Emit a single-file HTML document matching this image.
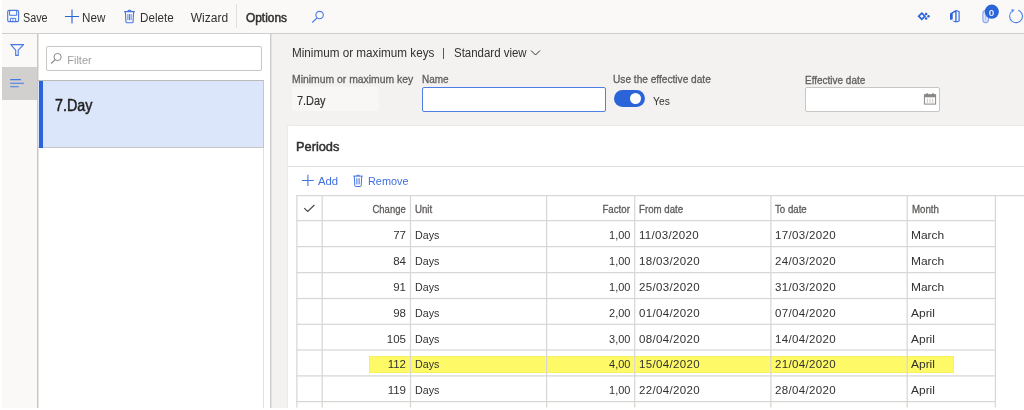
<!DOCTYPE html>
<html><head><meta charset="utf-8">
<style>
*{box-sizing:border-box;margin:0;padding:0}
html,body{width:1024px;height:410px;overflow:hidden;background:#fff;font-family:"Liberation Sans",sans-serif;color:#323130}
.a{position:absolute}
.t{position:absolute;white-space:nowrap;line-height:1;transform-origin:left top}
</style></head><body>
<div style="position:absolute;left:0;top:0;width:1024px;height:410px;filter:blur(0.35px)">
<div class="a" style="left:2px;top:-6px;width:1030px;height:39px;background:#faf9f8"></div>
<div class="a" style="left:2px;top:33px;width:1030px;height:1px;background:#d0cecc"></div>
<svg class="a" style="left:7px;top:9px" width="14" height="14" viewBox="0 0 14 14"><rect x="0.7" y="1.4" width="10.9" height="11.2" rx="1.3" fill="none" stroke="#4677e4" stroke-width="1.1"/><path d="M2.6 1.4V6.3H9.7V1.4" fill="none" stroke="#4677e4" stroke-width="1"/><path d="M3.4 12.6V9.3H8.7V12.6" fill="none" stroke="#4677e4" stroke-width="1"/><path d="M5.2 11H6.6" stroke="#4677e4" stroke-width="1"/></svg>
<div class="t" style="left:23.24px;top:11.88px;font-size:12px;color:#323130;font-weight:normal;transform:scaleX(0.9);">Save</div>
<svg class="a" style="left:64px;top:9px" width="16" height="15" viewBox="0 0 16 15"><path d="M1 7.5H15M8 0.5V14.5" stroke="#2b63d9" stroke-width="1.1" fill="none"/></svg>
<div class="t" style="left:82.19px;top:11.88px;font-size:12px;color:#323130;font-weight:normal;transform:scaleX(0.97);">New</div>
<svg class="a" style="left:123px;top:8px" width="13" height="16" viewBox="0 0 13 16"><path d="M1.1 3.6H11.9M4.4 3.6Q6.5 0.6 8.6 3.6M2.4 3.6L2.9 13.6Q3 14.7 4.1 14.7H8.9Q10 14.7 10.1 13.6L10.6 3.6" stroke="#4677e4" stroke-width="1.1" fill="none"/><path d="M4.9 6V12.2M6.5 6V12.2M8.1 6V12.2" stroke="#4677e4" stroke-width="0.9" fill="none"/></svg>
<div class="t" style="left:140.19px;top:11.88px;font-size:12px;color:#323130;font-weight:normal;transform:scaleX(0.97);">Delete</div>
<div class="t" style="left:190.76px;top:11.88px;font-size:12px;color:#323130;font-weight:normal;">Wizard</div>
<div class="a" style="left:236px;top:4px;width:1px;height:24px;background:#e1dfdd"></div>
<div class="t" style="left:246.17px;top:11.88px;font-size:12px;color:#323130;font-weight:normal;transform:scaleX(0.99);-webkit-text-stroke:0.5px #323130;">Options</div>
<svg class="a" style="left:311px;top:9.5px" width="14" height="14" viewBox="0 0 14 14"><circle cx="8.6" cy="5.1" r="3.7" fill="none" stroke="#4a7ae6" stroke-width="1.1"/><path d="M6 7.8L1.3 12.5" stroke="#4a7ae6" stroke-width="1.2"/></svg>
<svg class="a" style="left:916px;top:10px" width="16" height="12" viewBox="0 0 16 12"><path d="M5.8 3.1L8.9 6.2L5.8 9.3L2.7 6.2Z" fill="none" stroke="#2b63d9" stroke-width="1.7"/><circle cx="10.1" cy="3.9" r="1.25" fill="#2b63d9"/><circle cx="10.1" cy="8.5" r="1.25" fill="#2b63d9"/><circle cx="12.5" cy="6.2" r="1.25" fill="#2b63d9"/></svg>
<svg class="a" style="left:948px;top:9px" width="14" height="15" viewBox="0 0 14 15"><path d="M2 4.4L7.3 1.2H8.6V13.3H7.3L3.8 11.7L7.3 12V3L4.7 4.5V10.3L2 11Z" fill="#2b63d9"/><path d="M8.4 1.6L11.1 2.6V11.9L8.4 12.9" fill="none" stroke="#2b63d9" stroke-width="1.1"/></svg>
<svg class="a" style="left:980px;top:3px" width="22" height="22" viewBox="0 0 22 22"><rect x="2.9" y="7.4" width="5.6" height="12.2" rx="2.8" fill="#dce5fa" stroke="#86a3ea" stroke-width="1.1"/><path d="M5.7 9.5V17.5" stroke="#a9bef1" stroke-width="1"/><circle cx="11.8" cy="8.7" r="7.1" fill="#2b63d9"/></svg>
<div class="t" style="left:989.37px;top:7.50px;font-size:9.4px;color:#fff;font-weight:normal;transform:scaleX(0.95);-webkit-text-stroke:0.2px #fff;">0</div>
<svg class="a" style="left:1007px;top:8px" width="17" height="16" viewBox="0 0 17 16"><path d="M11.2 2.2A6.4 6.4 0 1 1 4.5 3.7" fill="none" stroke="#4f7fe6" stroke-width="1.1"/><path d="M4.4 1.2L7.6 1.8L5 4.7Z" fill="#4f7fe6"/></svg>
<div class="a" style="left:2px;top:34px;width:35px;height:374px;background:#faf9f8"></div>
<div class="a" style="left:37px;top:34px;width:1px;height:374px;background:#cac8c6"></div>
<div class="a" style="left:38px;top:34px;width:1px;height:374px;background:#e6e4e2"></div>
<div class="a" style="left:2px;top:67px;width:35px;height:33px;background:#d2d0ce"></div>
<svg class="a" style="left:10px;top:42px" width="15" height="15" viewBox="0 0 15 15"><path d="M0.8 2.6H13.6L8.2 8.2V13.4H5.7V8.2Z" fill="none" stroke="#4677e4" stroke-width="1.1" stroke-linejoin="round"/></svg>
<svg class="a" style="left:9px;top:77px" width="17" height="12" viewBox="0 0 17 12"><path d="M1.2 2.6H12M1.2 6.2H14.9M1.2 9.7H9.7" stroke="#4677e4" stroke-width="1.1"/></svg>
<div class="a" style="left:39px;top:34px;width:231px;height:374px;background:#fff"></div>
<div class="a" style="left:270px;top:34px;width:1px;height:374px;background:#d0cecc"></div>
<div class="a" style="left:271px;top:34px;width:1px;height:374px;background:#e4e2e0"></div>
<div class="a" style="left:46px;top:46px;width:216px;height:25px;border:1px solid #c8c6c4;border-radius:2px;background:#fff"></div>
<svg class="a" style="left:50px;top:52px" width="13" height="13" viewBox="0 0 13 13"><circle cx="7.6" cy="5" r="3.6" fill="none" stroke="#8a8886" stroke-width="1"/><path d="M5.1 7.6L1.2 11.5" stroke="#8a8886" stroke-width="1.1"/></svg>
<div class="t" style="left:67.23px;top:55.14px;font-size:11px;color:#a19f9d;font-weight:normal;">Filter</div>
<div class="a" style="left:38px;top:80px;width:226px;height:68px;background:#dce6fa;border:1px solid #c4c6ca;border-top-color:#bcbab8;border-left:none"></div>
<div class="a" style="left:39px;top:81px;width:4px;height:67px;background:#2b63d9"></div>
<div class="a" style="left:263px;top:148px;width:1px;height:260px;background:#e1dfdd"></div>
<div class="t" style="left:54.80px;top:96.81px;font-size:16.2px;color:#201f1e;font-weight:normal;transform:scaleX(0.885);-webkit-text-stroke:0.5px #201f1e;">7.Day</div>
<div class="a" style="left:272px;top:34px;width:760px;height:374px;background:#f3f2f1"></div>
<div class="t" style="left:291.58px;top:47.28px;font-size:12px;color:#323130;font-weight:normal;transform:scaleX(0.975);">Minimum or maximum keys</div>
<div class="a" style="left:443.3px;top:48px;width:1px;height:11px;background:#5a5856"></div>
<div class="t" style="left:453.70px;top:47.28px;font-size:12px;color:#323130;font-weight:normal;transform:scaleX(0.955);">Standard view</div>
<svg class="a" style="left:530px;top:48.5px" width="11" height="8" viewBox="0 0 11 8"><path d="M1 1.5L5.5 6L10 1.5" fill="none" stroke="#323130" stroke-width="1"/></svg>
<div class="t" style="left:291.57px;top:74.42px;font-size:10.5px;color:#605e5c;font-weight:normal;transform:scaleX(0.99);-webkit-text-stroke:0.3px #605e5c;">Minimum or maximum key</div>
<div class="a" style="left:292px;top:87px;width:87px;height:24px;background:#f8f7f6;border-radius:2px"></div>
<div class="t" style="left:296.64px;top:94.98px;font-size:12px;color:#323130;font-weight:normal;transform:scaleX(0.91);-webkit-text-stroke:0.15px #323130;">7.Day</div>
<div class="t" style="left:422.30px;top:74.42px;font-size:10.5px;color:#605e5c;font-weight:normal;transform:scaleX(0.95);-webkit-text-stroke:0.3px #605e5c;">Name</div>
<div class="a" style="left:422px;top:87px;width:184px;height:25px;background:#fff;border:1.5px solid #4f7fe6;border-radius:2px"></div>
<div class="t" style="left:613.29px;top:74.42px;font-size:10.5px;color:#605e5c;font-weight:normal;transform:scaleX(0.965);-webkit-text-stroke:0.3px #605e5c;">Use the effective date</div>
<div class="a" style="left:613.5px;top:90px;width:31px;height:17px;border-radius:8.5px;background:#2b63d9"></div>
<div class="a" style="left:630.2px;top:93px;width:11px;height:11px;border-radius:50%;background:#fff"></div>
<div class="t" style="left:653.28px;top:94.73px;font-size:11.7px;color:#323130;font-weight:normal;transform:scaleX(0.88);">Yes</div>
<div class="t" style="left:804.50px;top:74.62px;font-size:10.5px;color:#605e5c;font-weight:normal;transform:scaleX(0.95);-webkit-text-stroke:0.3px #605e5c;">Effective date</div>
<div class="a" style="left:804.5px;top:87px;width:135.5px;height:25px;background:#fff;border:1px solid #c8c6c4;border-radius:2px"></div>
<svg class="a" style="left:923px;top:92px" width="14" height="13" viewBox="0 0 14 13"><rect x="1.4" y="2.7" width="11.2" height="9.4" fill="none" stroke="#8a8886" stroke-width="1"/><rect x="1.4" y="2.7" width="11.2" height="2.6" fill="#8a8886"/><path d="M4 1.1V3.2M10 1.1V3.2" stroke="#797775" stroke-width="1.1"/><path d="M4.3 6.6V11M7 6.6V11M9.7 6.6V11" stroke="#c3c1bf" stroke-width="0.9"/></svg>
<div class="a" style="left:287.5px;top:126px;width:744.5px;height:282px;background:#fff;box-shadow:0 0 1.5px rgba(0,0,0,0.12)"></div>
<div class="a" style="left:287.5px;top:165.5px;width:744.5px;height:1px;background:#e1dfdd"></div>
<div class="t" style="left:295.90px;top:139.89px;font-size:13.2px;color:#323130;font-weight:normal;transform:scaleX(0.97);-webkit-text-stroke:0.5px #323130;">Periods</div>
<svg class="a" style="left:301px;top:174px" width="14" height="13" viewBox="0 0 14 13"><path d="M0.9 6.5H12.8M6.9 0.7V12" stroke="#4677e4" stroke-width="1.1"/></svg>
<div class="t" style="left:317.51px;top:175.43px;font-size:11.7px;color:#3f6fe0;font-weight:normal;transform:scaleX(0.97);">Add</div>
<svg class="a" style="left:352px;top:173px" width="12" height="14" viewBox="0 0 12 14"><path d="M1.2 3.1H10.8M4 3.1Q6 0.9 8 3.1M2.3 3.1L2.8 12.8Q2.9 13.5 3.6 13.5H8.4Q9.1 13.5 9.2 12.8L9.7 3.1" stroke="#4677e4" stroke-width="1" fill="none"/><path d="M4.6 5.2V11.4M6 5.2V11.4M7.4 5.2V11.4" stroke="#6b8fe8" stroke-width="0.9"/></svg>
<div class="t" style="left:368.04px;top:175.43px;font-size:11.7px;color:#3f6fe0;font-weight:normal;transform:scaleX(0.93);">Remove</div>
<div class="a" style="left:368.6px;top:355.5px;width:585.2px;height:17.5px;background:#fef967;box-shadow:inset 0 0 0 0.6px #f4ea50"></div>
<svg class="a" style="left:0px;top:0px" width="1034" height="410" viewBox="0 0 1034 410"><rect x="296.27" y="194.97" width="735.73" height="1.25" fill="#d9d7d5"/><rect x="296.27" y="219.97" width="699.75" height="1.25" fill="#d9d7d5"/><rect x="296.27" y="245.97" width="699.75" height="1.25" fill="#d9d7d5"/><rect x="296.27" y="271.98" width="699.75" height="1.25" fill="#d9d7d5"/><rect x="296.27" y="297.88" width="699.75" height="1.25" fill="#d9d7d5"/><rect x="296.27" y="323.68" width="699.75" height="1.25" fill="#d9d7d5"/><rect x="296.27" y="349.38" width="699.75" height="1.25" fill="#d9d7d5"/><rect x="296.27" y="375.27" width="699.75" height="1.25" fill="#d9d7d5"/><rect x="296.27" y="400.98" width="699.75" height="1.25" fill="#d9d7d5"/><rect x="296.27" y="194.97" width="1.25" height="212.60" fill="#d9d7d5"/><rect x="321.57" y="194.97" width="1.25" height="212.60" fill="#d9d7d5"/><rect x="409.88" y="194.97" width="1.25" height="212.60" fill="#d9d7d5"/><rect x="545.98" y="194.97" width="1.25" height="212.60" fill="#d9d7d5"/><rect x="634.08" y="194.97" width="1.25" height="212.60" fill="#d9d7d5"/><rect x="770.27" y="194.97" width="1.25" height="212.60" fill="#d9d7d5"/><rect x="906.58" y="194.97" width="1.25" height="212.60" fill="#d9d7d5"/><rect x="994.77" y="194.97" width="1.25" height="212.60" fill="#d9d7d5"/></svg>
<svg class="a" style="left:302px;top:203px" width="14" height="11" viewBox="0 0 14 11"><path d="M2.2 5.2L5.7 8.4L12.4 2" fill="none" stroke="#484644" stroke-width="1.15"/></svg>
<div class="t" style="right:617.89px;top:204.57px;font-size:10.2px;color:#5f5d5b;font-weight:normal;transform-origin:right top;transform:scaleX(0.93);-webkit-text-stroke:0.3px #5f5d5b;">Change</div>
<div class="t" style="left:414.82px;top:204.57px;font-size:10.2px;color:#5f5d5b;font-weight:normal;transform:scaleX(0.95);-webkit-text-stroke:0.3px #5f5d5b;">Unit</div>
<div class="t" style="right:394.09px;top:204.57px;font-size:10.2px;color:#5f5d5b;font-weight:normal;transform-origin:right top;transform:scaleX(0.95);-webkit-text-stroke:0.3px #5f5d5b;">Factor</div>
<div class="t" style="left:638.92px;top:204.57px;font-size:10.2px;color:#5f5d5b;font-weight:normal;transform:scaleX(0.95);-webkit-text-stroke:0.3px #5f5d5b;">From date</div>
<div class="t" style="left:775.12px;top:204.57px;font-size:10.2px;color:#5f5d5b;font-weight:normal;transform:scaleX(0.95);-webkit-text-stroke:0.3px #5f5d5b;">To date</div>
<div class="t" style="left:911.52px;top:204.57px;font-size:10.2px;color:#5f5d5b;font-weight:normal;transform:scaleX(0.95);-webkit-text-stroke:0.3px #5f5d5b;">Month</div>
<div class="t" style="right:618.02px;top:229.96px;font-size:11.5px;color:#323130;font-weight:normal;transform-origin:right top;">77</div>
<div class="t" style="left:414.75px;top:229.96px;font-size:11.5px;color:#323130;font-weight:normal;transform:scaleX(0.93);">Days</div>
<div class="t" style="right:393.82px;top:229.96px;font-size:11.5px;color:#323130;font-weight:normal;transform-origin:right top;transform:scaleX(0.95);">1,00</div>
<div class="t" style="left:638.90px;top:229.96px;font-size:11.5px;color:#323130;font-weight:normal;letter-spacing:0.35px">11/03/2020</div>
<div class="t" style="left:775.00px;top:229.96px;font-size:11.5px;color:#323130;font-weight:normal;letter-spacing:0.35px">17/03/2020</div>
<div class="t" style="left:911.16px;top:229.96px;font-size:11.5px;color:#323130;font-weight:normal;transform:scaleX(1.04);">March</div>
<div class="t" style="right:618.02px;top:255.96px;font-size:11.5px;color:#323130;font-weight:normal;transform-origin:right top;">84</div>
<div class="t" style="left:414.75px;top:255.96px;font-size:11.5px;color:#323130;font-weight:normal;transform:scaleX(0.93);">Days</div>
<div class="t" style="right:393.82px;top:255.96px;font-size:11.5px;color:#323130;font-weight:normal;transform-origin:right top;transform:scaleX(0.95);">1,00</div>
<div class="t" style="left:638.90px;top:255.96px;font-size:11.5px;color:#323130;font-weight:normal;letter-spacing:0.35px">18/03/2020</div>
<div class="t" style="left:775.00px;top:255.96px;font-size:11.5px;color:#323130;font-weight:normal;letter-spacing:0.35px">24/03/2020</div>
<div class="t" style="left:911.16px;top:255.96px;font-size:11.5px;color:#323130;font-weight:normal;transform:scaleX(1.04);">March</div>
<div class="t" style="right:618.02px;top:281.96px;font-size:11.5px;color:#323130;font-weight:normal;transform-origin:right top;">91</div>
<div class="t" style="left:414.75px;top:281.96px;font-size:11.5px;color:#323130;font-weight:normal;transform:scaleX(0.93);">Days</div>
<div class="t" style="right:393.82px;top:281.96px;font-size:11.5px;color:#323130;font-weight:normal;transform-origin:right top;transform:scaleX(0.95);">1,00</div>
<div class="t" style="left:638.90px;top:281.96px;font-size:11.5px;color:#323130;font-weight:normal;letter-spacing:0.35px">25/03/2020</div>
<div class="t" style="left:775.00px;top:281.96px;font-size:11.5px;color:#323130;font-weight:normal;letter-spacing:0.35px">31/03/2020</div>
<div class="t" style="left:911.16px;top:281.96px;font-size:11.5px;color:#323130;font-weight:normal;transform:scaleX(1.04);">March</div>
<div class="t" style="right:618.02px;top:307.86px;font-size:11.5px;color:#323130;font-weight:normal;transform-origin:right top;">98</div>
<div class="t" style="left:414.75px;top:307.86px;font-size:11.5px;color:#323130;font-weight:normal;transform:scaleX(0.93);">Days</div>
<div class="t" style="right:393.82px;top:307.86px;font-size:11.5px;color:#323130;font-weight:normal;transform-origin:right top;transform:scaleX(0.95);">2,00</div>
<div class="t" style="left:638.90px;top:307.86px;font-size:11.5px;color:#323130;font-weight:normal;letter-spacing:0.35px">01/04/2020</div>
<div class="t" style="left:775.00px;top:307.86px;font-size:11.5px;color:#323130;font-weight:normal;letter-spacing:0.35px">07/04/2020</div>
<div class="t" style="left:911.16px;top:307.86px;font-size:11.5px;color:#323130;font-weight:normal;transform:scaleX(1.04);">April</div>
<div class="t" style="right:618.02px;top:333.66px;font-size:11.5px;color:#323130;font-weight:normal;transform-origin:right top;">105</div>
<div class="t" style="left:414.75px;top:333.66px;font-size:11.5px;color:#323130;font-weight:normal;transform:scaleX(0.93);">Days</div>
<div class="t" style="right:393.82px;top:333.66px;font-size:11.5px;color:#323130;font-weight:normal;transform-origin:right top;transform:scaleX(0.95);">3,00</div>
<div class="t" style="left:638.90px;top:333.66px;font-size:11.5px;color:#323130;font-weight:normal;letter-spacing:0.35px">08/04/2020</div>
<div class="t" style="left:775.00px;top:333.66px;font-size:11.5px;color:#323130;font-weight:normal;letter-spacing:0.35px">14/04/2020</div>
<div class="t" style="left:911.16px;top:333.66px;font-size:11.5px;color:#323130;font-weight:normal;transform:scaleX(1.04);">April</div>
<div class="t" style="right:618.02px;top:359.36px;font-size:11.5px;color:#323130;font-weight:normal;transform-origin:right top;">112</div>
<div class="t" style="left:414.75px;top:359.36px;font-size:11.5px;color:#323130;font-weight:normal;transform:scaleX(0.93);">Days</div>
<div class="t" style="right:393.82px;top:359.36px;font-size:11.5px;color:#323130;font-weight:normal;transform-origin:right top;transform:scaleX(0.95);">4,00</div>
<div class="t" style="left:638.90px;top:359.36px;font-size:11.5px;color:#323130;font-weight:normal;letter-spacing:0.35px">15/04/2020</div>
<div class="t" style="left:775.00px;top:359.36px;font-size:11.5px;color:#323130;font-weight:normal;letter-spacing:0.35px">21/04/2020</div>
<div class="t" style="left:911.16px;top:359.36px;font-size:11.5px;color:#323130;font-weight:normal;transform:scaleX(1.04);">April</div>
<div class="t" style="right:618.02px;top:385.26px;font-size:11.5px;color:#323130;font-weight:normal;transform-origin:right top;">119</div>
<div class="t" style="left:414.75px;top:385.26px;font-size:11.5px;color:#323130;font-weight:normal;transform:scaleX(0.93);">Days</div>
<div class="t" style="right:393.82px;top:385.26px;font-size:11.5px;color:#323130;font-weight:normal;transform-origin:right top;transform:scaleX(0.95);">1,00</div>
<div class="t" style="left:638.90px;top:385.26px;font-size:11.5px;color:#323130;font-weight:normal;letter-spacing:0.35px">22/04/2020</div>
<div class="t" style="left:775.00px;top:385.26px;font-size:11.5px;color:#323130;font-weight:normal;letter-spacing:0.35px">28/04/2020</div>
<div class="t" style="left:911.16px;top:385.26px;font-size:11.5px;color:#323130;font-weight:normal;transform:scaleX(1.04);">April</div>
<div class="a" style="left:0px;top:0px;width:2px;height:410px;background:#fff"></div>
<div class="a" style="left:0px;top:408px;width:1024px;height:2px;background:#fff"></div>
</div></body></html>
